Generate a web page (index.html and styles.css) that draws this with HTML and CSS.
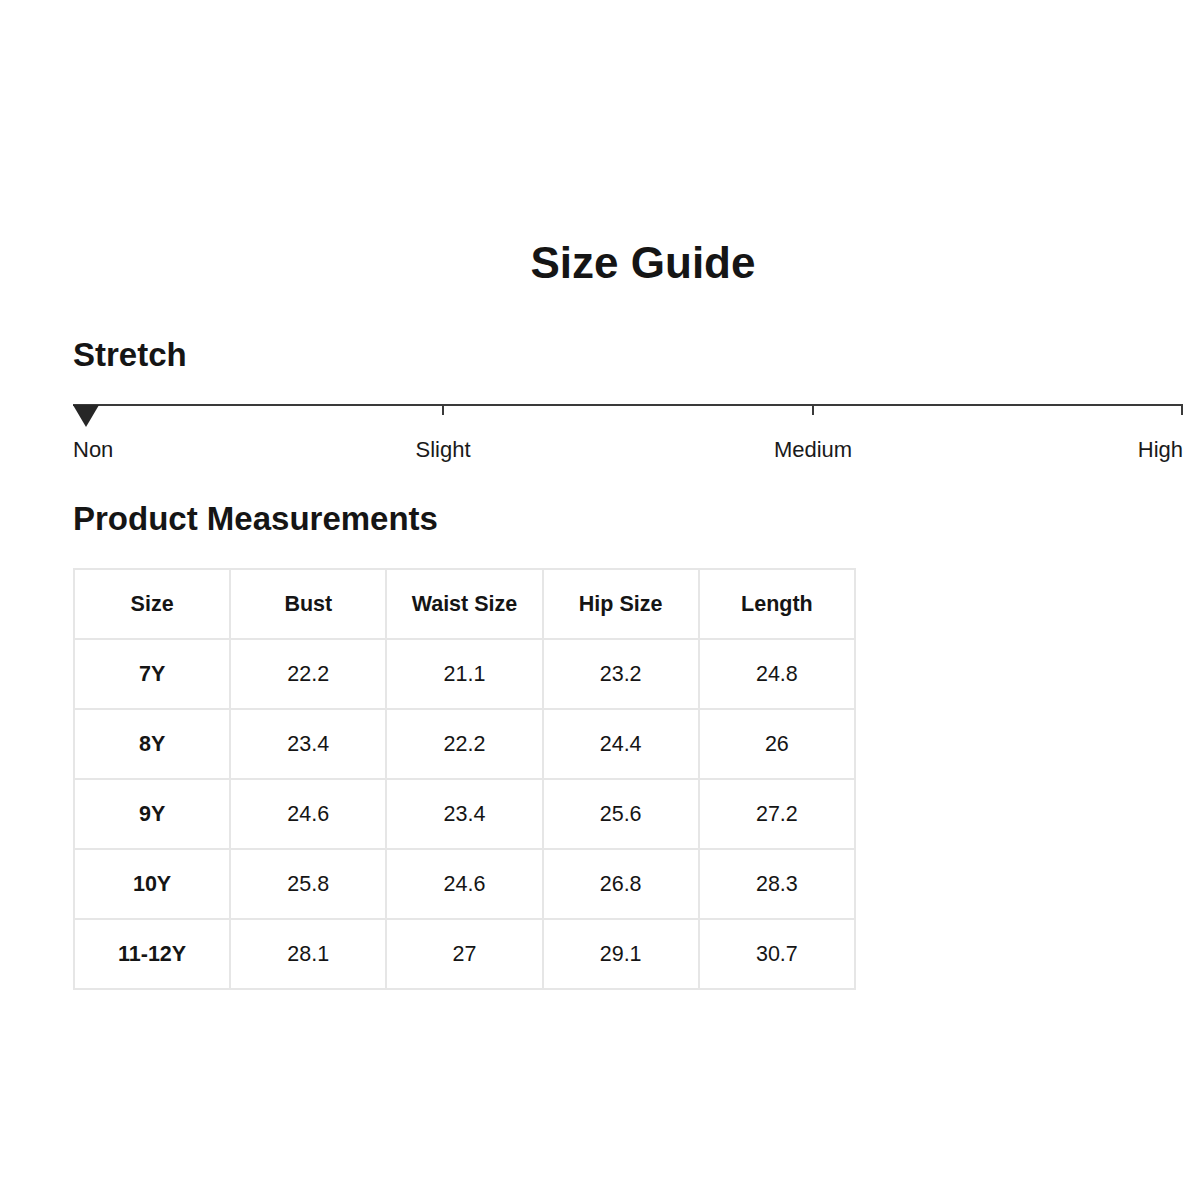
FILE: index.html
```html
<!DOCTYPE html>
<html>
<head>
<meta charset="utf-8">
<link rel="stylesheet" href="styles.css">
</head>
<body>
<main class="page">
  <h1 class="title">Size Guide</h1>
  <h2 class="section-title">Stretch</h2>
  <div class="scale">
    <div class="scale-bar">
      <span class="tick tick-1"></span>
      <span class="tick tick-2"></span>
      <span class="tick tick-3"></span>
      <span class="marker"></span>
    </div>
    <div class="scale-labels">
      <span class="lbl lbl-non">Non</span>
      <span class="lbl lbl-mid">Slight</span>
      <span class="lbl lbl-mid">Medium</span>
      <span class="lbl lbl-high">High</span>
    </div>
  </div>
  <h2 class="section-title pm">Product Measurements</h2>
  <table class="sizes">
    <thead>
      <tr><th>Size</th><th>Bust</th><th>Waist Size</th><th>Hip Size</th><th>Length</th></tr>
    </thead>
    <tbody>
      <tr><th>7Y</th><td>22.2</td><td>21.1</td><td>23.2</td><td>24.8</td></tr>
      <tr><th>8Y</th><td>23.4</td><td>22.2</td><td>24.4</td><td>26</td></tr>
      <tr><th>9Y</th><td>24.6</td><td>23.4</td><td>25.6</td><td>27.2</td></tr>
      <tr><th>10Y</th><td>25.8</td><td>24.6</td><td>26.8</td><td>28.3</td></tr>
      <tr><th>11-12Y</th><td>28.1</td><td>27</td><td>29.1</td><td>30.7</td></tr>
    </tbody>
  </table>
</main>
</body>
</html>
```
FILE: styles.css
```css
html, body {
  margin: 0;
  padding: 0;
  background: #fff;
}
body {
  font-family: "Liberation Sans", Arial, sans-serif;
  color: #151515;
}
.page {
  width: 1140px;
  padding: 235px 0 0 73px;
}
.title {
  margin: 0;
  font-size: 44px;
  line-height: 56px;
  font-weight: 700;
  text-align: center;
}
.section-title {
  margin: 44px 0 0;
  font-size: 33px;
  line-height: 40px;
  font-weight: 700;
}
.scale {
  width: 1110px;
  margin-top: 29px;
}
.scale-bar {
  position: relative;
  height: 2px;
  background: #3a3a3a;
}
.tick {
  position: absolute;
  top: 0;
  width: 2px;
  height: 11px;
  background: #3a3a3a;
}
.tick-1 { left: 369px; }
.tick-2 { left: 739px; }
.tick-3 { right: 0; }
.marker {
  position: absolute;
  left: 0;
  top: 1px;
  width: 0;
  height: 0;
  border-left: 13px solid transparent;
  border-right: 13px solid transparent;
  border-top: 22px solid #262626;
}
.scale-labels {
  display: grid;
  grid-template-columns: 185px 370px 370px 185px;
  margin-top: 31px;
  font-size: 22px;
  line-height: 26px;
  color: #1a1a1a;
}
.lbl-non { justify-self: start; }
.lbl-high { justify-self: end; }
.lbl-mid {
  justify-self: start;
  margin-left: 185px;
  transform: translateX(-50%);
}
.section-title.pm {
  margin-top: 36px;
}
.sizes {
  width: 783px;
  margin-top: 29px;
  table-layout: fixed;
  border-collapse: collapse;
  border: 2px solid #e6e6e6;
  font-size: 21.5px;
}
.sizes th, .sizes td {
  height: 68px;
  padding: 0;
  border: 2px solid #e6e6e6;
  text-align: center;
  vertical-align: middle;
  color: #151515;
}
.sizes th {
  font-weight: 700;
}
.sizes td {
  font-weight: 400;
}
```
